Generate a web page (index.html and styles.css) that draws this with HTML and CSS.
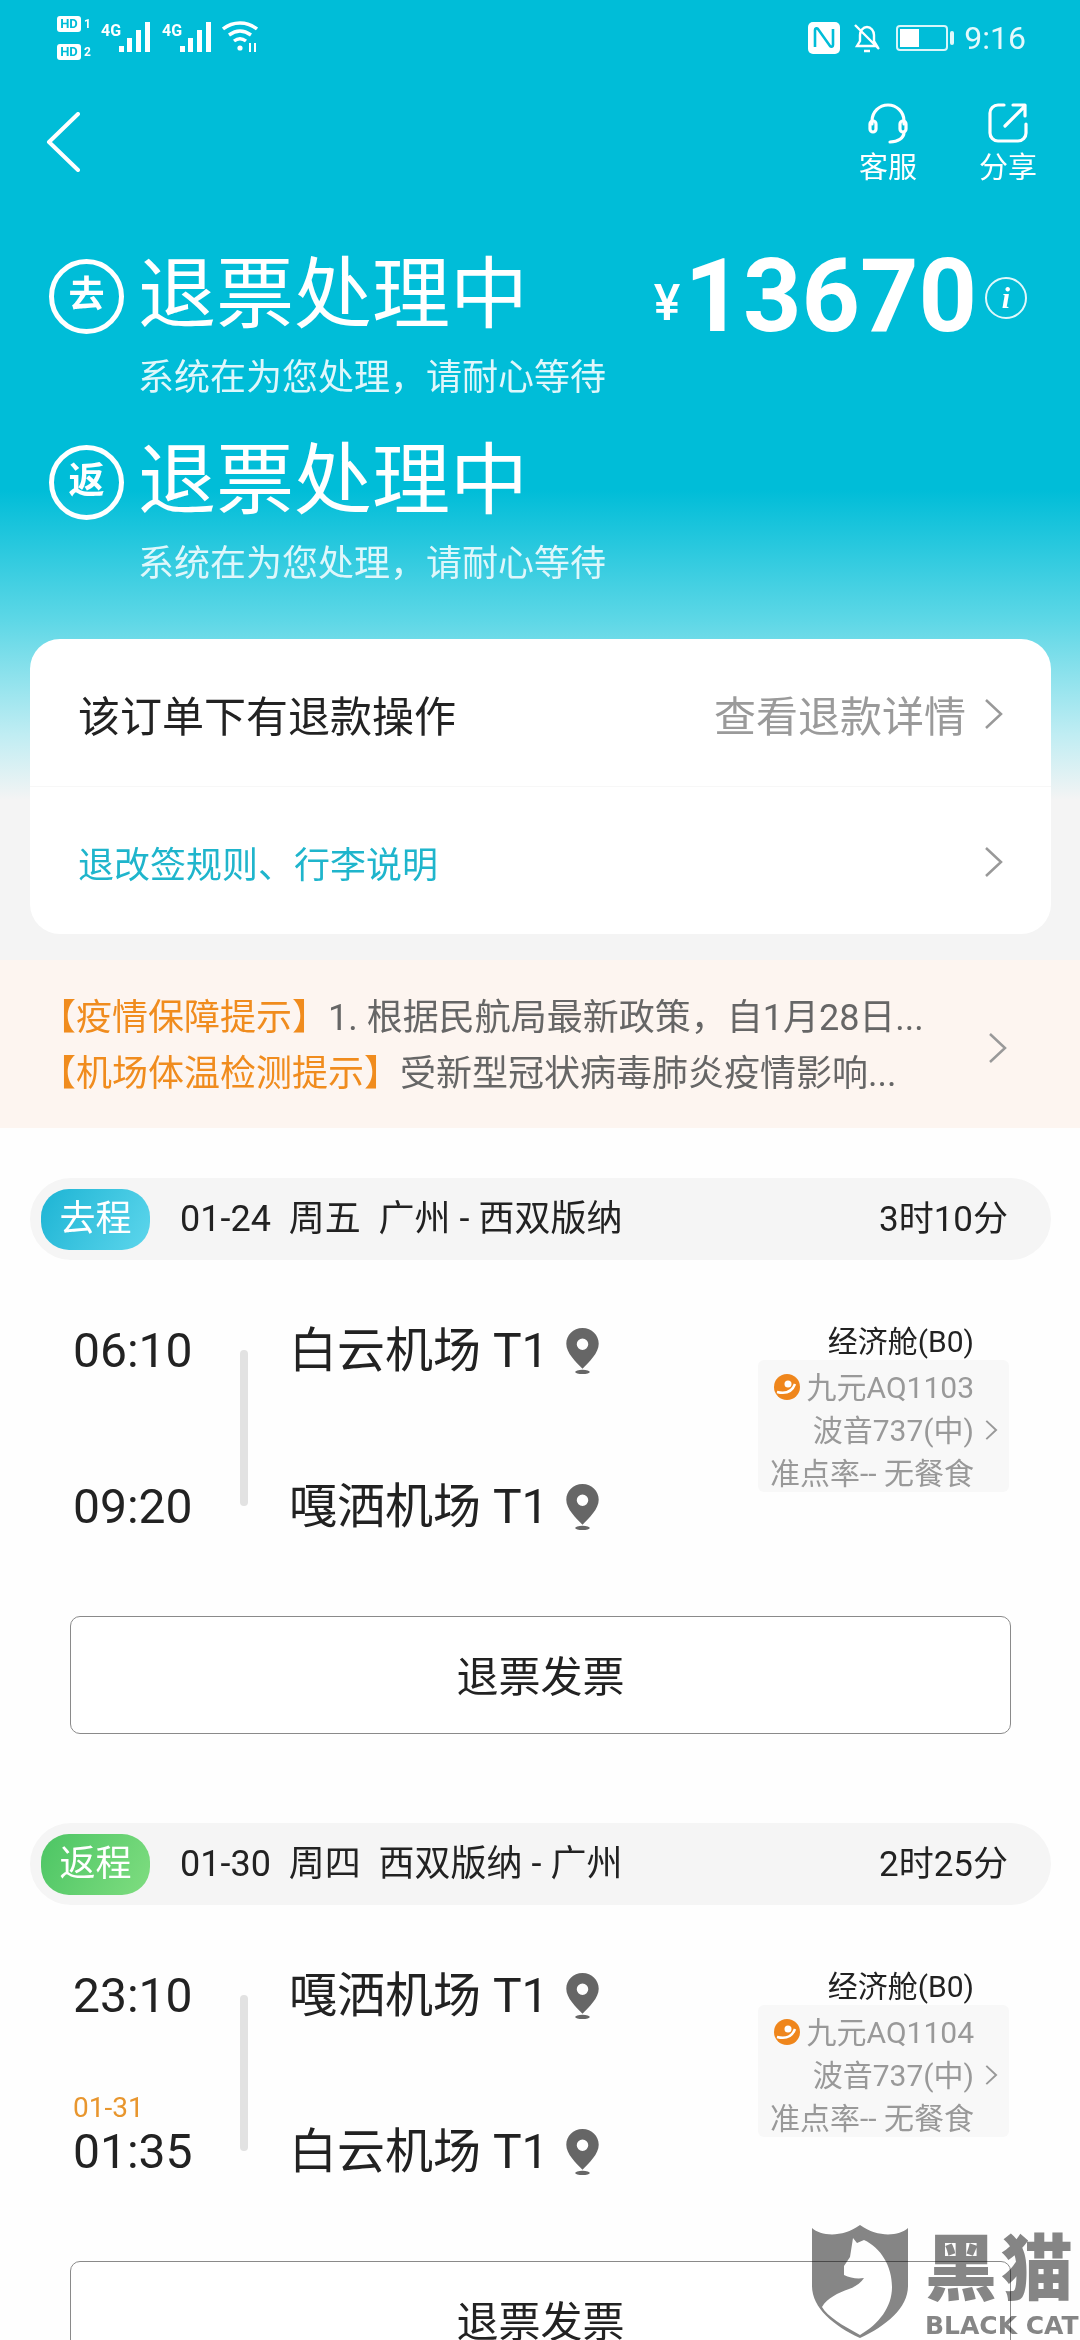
FILE: index.html
```html
<!DOCTYPE html>
<html lang="zh-CN">
<head>
    <meta charset="UTF-8">
    <meta name="viewport" content="width=device-width, initial-scale=1.0">
    <title>退票处理中</title>
    <link rel="stylesheet" href="styles.css">
</head>
<body>
<div class="page">

    <div class="hero">
        <!-- status bar -->
        <div class="statusbar">
            <div class="status-left">
                <div class="hd-stack">
                    <div class="hd"><span class="hd-box">HD</span><span class="hd-num">1</span></div>
                    <div class="hd"><span class="hd-box">HD</span><span class="hd-num">2</span></div>
                </div>
                <div class="signal">
                    <span class="net">4G</span>
                    <svg class="bars" viewBox="0 0 34 30"><path d="M1 24h5v6H1zM9 16h5v14H9zM18 8h5v22h-5zM27 0h5v30h-5z"/></svg>
                </div>
                <div class="signal">
                    <span class="net">4G</span>
                    <svg class="bars" viewBox="0 0 34 30"><path d="M1 24h5v6H1zM9 16h5v14H9zM18 8h5v22h-5zM27 0h5v30h-5z"/></svg>
                </div>
                <svg class="wifi" viewBox="0 0 36 32" fill="none" stroke="#fff" stroke-width="3.4">
                    <path d="M1 8C11 0 25 0 35 8"/>
                    <path d="M7 14c7-5 15-5 22 0"/>
                    <path d="M12 20c4-3 8-3 12 0"/>
                    <circle cx="18" cy="27" r="2.6" fill="#fff" stroke="none"/>
                    <path d="M28 22v9M33 22v9" stroke-width="2"/>
                </svg>
            </div>
            <div class="status-right">
                <svg class="nfc" viewBox="0 0 32 32"><rect width="32" height="32" rx="5" fill="#fff"/><path d="M7 25V8c0-2 2-2 3-1l12 17c1 1 3 1 3-1V7" fill="none" stroke="#00bdd8" stroke-width="2.6"/></svg>
                <svg class="bell" viewBox="0 0 28 30" fill="none" stroke="#fff" stroke-width="2.4"><path d="M4 23h20l-3-5v-6c0-4-3-8-7-8s-7 4-7 8v6zM11 28h6M2 2l24 24"/></svg>
                <div class="battery"><span class="battery-level"></span></div>
                <span class="battery-tip"></span>
                <span class="clock">9:16</span>
            </div>
        </div>

        <!-- top actions -->
        <div class="topbar">
            <svg class="back" viewBox="0 0 34 60" fill="none" stroke="#fff" stroke-width="4" stroke-linecap="round" stroke-linejoin="round"><path d="M32 2L3 30l29 28"/></svg>
            <div class="actions">
                <div class="action">
                    <svg viewBox="0 0 42 42" fill="none" stroke="#fff" stroke-width="3.2" stroke-linecap="round"><path d="M5 22V19a16 16 0 0 1 32 0v3"/><rect x="3" y="19" width="6" height="11" rx="3"/><rect x="33" y="19" width="6" height="11" rx="3"/><path d="M37 30c0 6-6 10-14 10"/></svg>
                    <span>客服</span>
                </div>
                <div class="action">
                    <svg viewBox="0 0 42 42" fill="none" stroke="#fff" stroke-width="3.2" stroke-linecap="round" stroke-linejoin="round"><path d="M17 3H11a8 8 0 0 0-8 8v20a8 8 0 0 0 8 8h20a8 8 0 0 0 8-8v-9"/><path d="M18 24L38 4M26 3h12v11"/></svg>
                    <span>分享</span>
                </div>
            </div>
        </div>

        <div class="summary">
            <div class="status-list">
                <div class="status-item">
                    <div class="status-head"><span class="status-mark">去</span><h2 class="status-title">退票处理中</h2></div>
                    <p class="status-sub">系统在为您处理&#xFF0C;请耐心等待</p>
                </div>
                <div class="status-item">
                    <div class="status-head"><span class="status-mark">返</span><h2 class="status-title">退票处理中</h2></div>
                    <p class="status-sub">系统在为您处理&#xFF0C;请耐心等待</p>
                </div>
            </div>
            <div class="amount">
                <span class="yen">¥</span><span class="price">13670</span>
                <span class="info">i</span>
            </div>
        </div>

        <div class="card">
            <div class="card-row card-row-first">
                <span class="card-title">该订单下有退款操作</span>
                <span class="card-more">查看退款详情<svg class="chev" viewBox="0 0 20 32"><path d="M2 2l15 14L2 30"/></svg></span>
            </div>
            <div class="card-row">
                <span class="card-link">退改签规则、行李说明</span>
                <svg class="chev" viewBox="0 0 20 32"><path d="M2 2l15 14L2 30"/></svg>
            </div>
        </div>
    </div>

    <div class="notice">
        <div class="notice-text">
            <p><b>【疫情保障提示】</b>1. 根据民航局最新政策&#xFF0C;自1月28日...</p>
            <p><b>【机场体温检测提示】</b>受新型冠状病毒肺炎疫情影响...</p>
        </div>
        <svg class="chev" viewBox="0 0 20 32"><path d="M2 2l15 14L2 30"/></svg>
    </div>

    <!-- outbound -->
    <section class="trip">
        <div class="trip-bar">
            <span class="badge badge-go">去程</span>
            <span class="trip-info">01-24&nbsp; 周五&nbsp; 广州 - 西双版纳</span>
            <span class="trip-time">3时10分</span>
        </div>
        <div class="flight">
            <div class="stops">
                <div class="time">06:10</div>
                <div class="stop-line"></div>
                <div class="airport">白云机场 T1<svg class="pin" viewBox="0 0 33 44"><path fill-rule="evenodd" fill="#666" d="M16.500 0C7.500 0 1 7 1 15c0 9 9 17 15.500 24C23 32 32 24 32 15 32 7 25.500 0 16.500 0zm0 10a5.500 5.500 0 1 1 0 11 5.500 5.500 0 0 1 0-11z"/><ellipse cx="16.500" cy="42" rx="7" ry="2" fill="#666"/></svg></div>
                <div class="time">09:20</div>
                <div class="airport">嘎洒机场 T1<svg class="pin" viewBox="0 0 33 44"><path fill-rule="evenodd" fill="#666" d="M16.500 0C7.500 0 1 7 1 15c0 9 9 17 15.500 24C23 32 32 24 32 15 32 7 25.500 0 16.500 0zm0 10a5.500 5.500 0 1 1 0 11 5.500 5.500 0 0 1 0-11z"/><ellipse cx="16.500" cy="42" rx="7" ry="2" fill="#666"/></svg></div>
            </div>
            <div class="cabin">
                <div class="cabin-name">经济舱(B0)</div>
                <div class="plane">
                    <div class="plane-lines">
                        <div class="plane-air"><svg class="airline" viewBox="0 0 26 26"><circle cx="13" cy="13" r="13" fill="#ef861c"/><circle cx="14" cy="10" r="3.500" fill="#fff"/><path d="M3 18c8 2 15 0 18-8" fill="none" stroke="#fff" stroke-width="2.500"/></svg>九元AQ1103</div>
                        <div>波音737(中)</div>
                        <div>准点率-- 无餐食</div>
                    </div>
                    <svg class="chev chev-small" viewBox="0 0 20 32"><path d="M2 2l15 14L2 30"/></svg>
                </div>
            </div>
        </div>
        <div class="ticket-btn">退票发票</div>
    </section>

    <!-- return -->
    <section class="trip trip-return">
        <div class="trip-bar">
            <span class="badge badge-back">返程</span>
            <span class="trip-info">01-30&nbsp; 周四&nbsp; 西双版纳 - 广州</span>
            <span class="trip-time">2时25分</span>
        </div>
        <div class="flight">
            <div class="stops">
                <div class="time">23:10</div>
                <div class="stop-line"></div>
                <div class="airport">嘎洒机场 T1<svg class="pin" viewBox="0 0 33 44"><path fill-rule="evenodd" fill="#666" d="M16.500 0C7.500 0 1 7 1 15c0 9 9 17 15.500 24C23 32 32 24 32 15 32 7 25.500 0 16.500 0zm0 10a5.500 5.500 0 1 1 0 11 5.500 5.500 0 0 1 0-11z"/><ellipse cx="16.500" cy="42" rx="7" ry="2" fill="#666"/></svg></div>
                <div class="time"><span class="next-day">01-31</span>01:35</div>
                <div class="airport">白云机场 T1<svg class="pin" viewBox="0 0 33 44"><path fill-rule="evenodd" fill="#666" d="M16.500 0C7.500 0 1 7 1 15c0 9 9 17 15.500 24C23 32 32 24 32 15 32 7 25.500 0 16.500 0zm0 10a5.500 5.500 0 1 1 0 11 5.500 5.500 0 0 1 0-11z"/><ellipse cx="16.500" cy="42" rx="7" ry="2" fill="#666"/></svg></div>
            </div>
            <div class="cabin">
                <div class="cabin-name">经济舱(B0)</div>
                <div class="plane">
                    <div class="plane-lines">
                        <div class="plane-air"><svg class="airline" viewBox="0 0 26 26"><circle cx="13" cy="13" r="13" fill="#ef861c"/><circle cx="14" cy="10" r="3.500" fill="#fff"/><path d="M3 18c8 2 15 0 18-8" fill="none" stroke="#fff" stroke-width="2.500"/></svg>九元AQ1104</div>
                        <div>波音737(中)</div>
                        <div>准点率-- 无餐食</div>
                    </div>
                    <svg class="chev chev-small" viewBox="0 0 20 32"><path d="M2 2l15 14L2 30"/></svg>
                </div>
            </div>
        </div>
        <div class="ticket-btn">退票发票</div>
    </section>

    <!-- watermark -->
    <div class="watermark">
        <svg class="wm-shield" viewBox="0 0 96 113">
            <path fill="#868686" d="M0 3c9 8 30 10 48-3 18 13 39 11 48 3v58c0 22-22 40-48 52C22 101 0 83 0 61z"/>
            <path fill="#fff" d="M41 13l4 5 7-3c17 8 28 26 28 47 0 20-13 37-32 48C30 100 16 92 10 82c5-9 16-14 27-18 6-2 12-6 15-11-7 1-14 0-20-3l0-9 6-9z"/>
        </svg>
        <div class="wm-text">
            <div class="wm-cn">黑猫</div>
            <div class="wm-en">BLACK CAT</div>
        </div>
    </div>

</div>
</body>
</html>
```

FILE: styles.css
```css
*{
    padding: 0;
    margin: 0;
    box-sizing: border-box;
}
body{
    background-color: #fff;
    font-family: Roboto, "Noto Sans CJK SC", sans-serif;
    color: #222;
}
.page{
    position: relative;
    width: 1080px;
    height: 2340px;
    overflow: hidden;
    background-color: #fefefe;
}

/* top area */
.hero{
    height: 960px;
    color: #fff;
    background: linear-gradient(180deg, #00bdd8 0, #00bdd8 490px, #5dd7e6 620px, #c0edf3 735px, #f4f4f4 800px);
}
.statusbar{
    height: 72px;
    display: flex;
    justify-content: space-between;
    align-items: flex-start;
    padding: 16px 54px 0 57px;
}
.status-left{
    display: flex;
    align-items: flex-start;
}
.hd-stack{
    display: flex;
    flex-direction: column;
    gap: 12px;
    width: 44px;
}
.hd{
    display: flex;
    align-items: center;
    gap: 3px;
    height: 16px;
}
.hd-box{
    width: 24px;
    height: 16px;
    background-color: #fff;
    color: #00bdd8;
    border-radius: 3px;
    font-size: 13px;
    font-weight: 700;
    line-height: 16px;
    text-align: center;
}
.hd-num{
    font-size: 12px;
    font-weight: 700;
    line-height: 16px;
}
.signal{
    display: flex;
    align-items: flex-start;
    width: 61px;
}
.net{
    font-size: 16px;
    font-weight: 700;
    line-height: 20px;
    margin-top: 5px;
    width: 17px;
}
.bars{
    width: 34px;
    height: 30px;
    margin-top: 6px;
    fill: #fff;
}
.wifi{
    width: 36px;
    height: 32px;
    margin-top: 5px;
    margin-left: -1px;
}
.status-right{
    display: flex;
    align-items: center;
    height: 38px;
    margin-top: 3px;
}
.nfc{
    width: 32px;
    height: 32px;
}
.bell{
    width: 28px;
    height: 30px;
    margin-left: 13px;
}
.battery{
    width: 52px;
    height: 26px;
    margin-left: 15px;
    border: 2px solid #d8f6fa;
    border-radius: 4px;
    padding: 2px;
}
.battery-level{
    display: block;
    width: 19px;
    height: 100%;
    background-color: #fff;
}
.battery-tip{
    width: 4px;
    height: 14px;
    margin-left: 2px;
    background-color: #e0f8fb;
    border-radius: 2px;
}
.clock{
    font-size: 32px;
    line-height: 38px;
    margin-left: 10px;
    color: #e4f9fc;
}
.topbar{
    display: flex;
    justify-content: space-between;
    align-items: flex-start;
    height: 88px;
    margin-top: 30px;
    padding: 0 42px 0 46px;
}
.back{
    width: 34px;
    height: 60px;
    margin-top: 10px;
}
.actions{
    display: flex;
    gap: 60px;
}
.action{
    width: 60px;
    display: flex;
    flex-direction: column;
    align-items: center;
    gap: 5px;
    font-size: 29px;
    line-height: 38px;
}
.action svg{
    width: 42px;
    height: 42px;
}

/* refund status */
.summary{
    display: flex;
    justify-content: space-between;
    align-items: flex-start;
    margin-top: 66px;
    padding: 0 53px 0 49px;
}
.status-list{
    display: flex;
    flex-direction: column;
    gap: 39px;
}
.status-head{
    display: flex;
    align-items: center;
    gap: 14px;
}
.status-mark{
    width: 75px;
    height: 75px;
    border: 5px solid #fff;
    border-radius: 50%;
    font-size: 36px;
    font-weight: 700;
    line-height: 63px;
    text-align: center;
}
.status-title{
    font-size: 78px;
    font-weight: 400;
    line-height: 80px;
}
.status-sub{
    font-size: 36px;
    line-height: 50px;
    margin-top: 17px;
    margin-left: 89px;
    color: #dff7fb;
}
.amount{
    display: flex;
    align-items: center;
    height: 80px;
}
.yen{
    font-size: 50px;
    font-weight: 500;
    line-height: 60px;
    margin-top: 14px;
    margin-right: 4px;
}
.price{
    font-size: 102px;
    font-weight: 700;
    line-height: 80px;
}
.info{
    width: 42px;
    height: 42px;
    margin-left: 8px;
    margin-top: 4px;
    border: 2px solid #e0f8fb;
    border-radius: 50%;
    font-family: "Liberation Serif", serif;
    font-style: italic;
    font-weight: 700;
    font-size: 30px;
    line-height: 38px;
    text-align: center;
}

/* refund card */
.card{
    width: 1021px;
    height: 295px;
    margin: 50px 0 0 30px;
    background-color: #fff;
    border-radius: 30px;
    color: #222;
}
.card-row{
    height: 147px;
    display: flex;
    justify-content: space-between;
    align-items: center;
    padding: 2px 47px 0 48px;
}
.card-row-first{
    height: 148px;
    border-bottom: 1px solid #f7f7f7;
}
.card-title{
    font-size: 42px;
}
.card-more{
    display: flex;
    align-items: center;
    gap: 18px;
    font-size: 42px;
    color: #9a9a9a;
}
.card-link{
    font-size: 36px;
    color: #1fb5cc;
}
.chev{
    width: 20px;
    height: 32px;
    flex-shrink: 0;
    fill: none;
    stroke: #999;
    stroke-width: 2.500;
}

/* notice */
.notice{
    height: 168px;
    background-color: #fdf5f0;
    display: flex;
    justify-content: space-between;
    align-items: center;
    padding: 0 72px 0 40px;
    font-size: 36px;
    line-height: 56px;
    color: #666;
}
.notice-text{
    margin-top: 4px;
}
.notice .chev{
    margin-top: 8px;
}
.notice b{
    font-weight: 400;
    color: #f08c1e;
}

/* trips */
.trip{
    padding-top: 50px;
}
.trip-return{
    padding-top: 89px;
}
.trip-bar{
    width: 1021px;
    height: 82px;
    margin-left: 30px;
    padding: 0 43px 0 11px;
    background-color: #f5f5f5;
    border-radius: 41px;
    display: flex;
    align-items: center;
    font-size: 36px;
}
.badge{
    width: 109px;
    height: 61px;
    border-radius: 28px;
    color: #fff;
    font-size: 36px;
    line-height: 60px;
    text-align: center;
}
.badge-go{
    background: linear-gradient(120deg, #1db4d4, #5dd6ec);
}
.badge-back{
    background: linear-gradient(120deg, #4cc564, #7fdd80);
}
.trip-info{
    margin-left: 30px;
    margin-bottom: 8px;
    flex: 1;
}
.trip-time{
    font-size: 35px;
    margin-bottom: 8px;
}
.flight{
    display: flex;
    justify-content: space-between;
    padding: 60px 71px 0 73px;
}
.stops{
    display: grid;
    grid-template-columns: 167px 8px auto;
    grid-template-rows: 60px 60px;
    row-gap: 96px;
}
.time{
    grid-column: 1;
    position: relative;
    font-size: 48px;
    line-height: 62px;
}
.next-day{
    position: absolute;
    left: 0;
    bottom: 100%;
    font-size: 28px;
    line-height: 26px;
    color: #e8962e;
}
.stop-line{
    grid-column: 2;
    grid-row: 1 / 3;
    margin: 30px 0;
    background-color: #e2e2e2;
    border-radius: 4px;
}
.airport{
    grid-column: 3;
    display: flex;
    align-items: center;
    gap: 16px;
    margin-left: 41px;
    padding-top: 2px;
    font-size: 48px;
    line-height: 58px;
}
.pin{
    width: 35px;
    height: 46px;
}
.cabin{
    width: 251px;
    padding-top: 4px;
}
.cabin-name{
    height: 36px;
    padding-right: 35px;
    font-size: 30px;
    line-height: 36px;
    text-align: right;
}
.plane{
    height: 132px;
    padding: 8px 11px 0 0;
    background-color: #f8f8f8;
    border-radius: 6px;
    display: flex;
    justify-content: flex-end;
    align-items: center;
    gap: 11px;
    font-size: 30px;
    line-height: 43px;
    color: #999;
}
.plane-lines{
    text-align: right;
}
.plane-air{
    display: flex;
    align-items: center;
    justify-content: flex-end;
    gap: 7px;
}
.airline{
    width: 26px;
    height: 26px;
}
.chev-small{
    width: 13px;
    height: 22px;
    stroke-width: 3;
}
.ticket-btn{
    width: 941px;
    height: 118px;
    margin: 80px 0 0 70px;
    border: 1px solid #8a8a8a;
    border-radius: 10px;
    font-size: 42px;
    line-height: 122px;
    text-align: center;
    background-color: #fff;
}

/* watermark sits over the last button */
.watermark{
    position: absolute;
    left: 812px;
    top: 2225px;
    display: flex;
    gap: 17px;
    mix-blend-mode: multiply;
    color: #868686;
}
.wm-shield{
    width: 96px;
    height: 113px;
}
.wm-text{
    width: 155px;
}
.wm-cn{
    font-size: 72px;
    font-weight: 900;
    line-height: 76px;
    letter-spacing: 4px;
    margin-top: 7px;
    white-space: nowrap;
}
.wm-en{
    font-family: "DejaVu Sans", sans-serif;
    font-size: 25px;
    font-weight: 700;
    line-height: 24px;
    margin-top: 6px;
    white-space: nowrap;
}
```
